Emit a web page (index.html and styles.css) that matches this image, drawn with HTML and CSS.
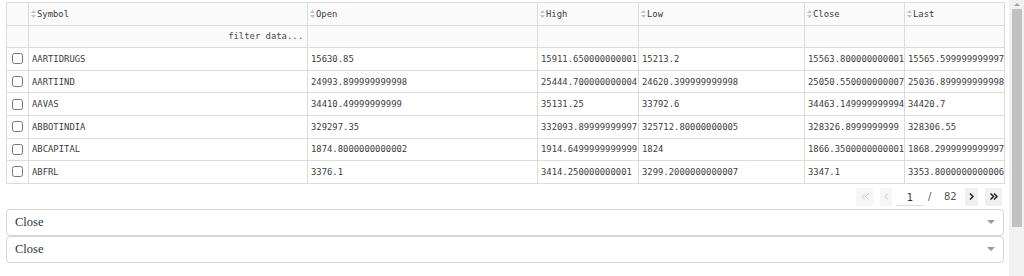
FILE: index.html
```html
<!DOCTYPE html>
<html>
<head>
<meta charset="utf-8">
<link rel="stylesheet" href="styles.css">
</head>
<body>
<div class="page">
  <table class="grid">
    <colgroup>
      <col class="c-sel"><col class="c-sym"><col class="c-open"><col class="c-high"><col class="c-low"><col class="c-close"><col class="c-last">
    </colgroup>
    <thead>
      <tr class="hdr">
        <th></th>
        <th><span class="sort"><svg width="5" height="8" viewBox="0 0 5 8"><path d="M2.5 0L5 3H0Z M2.5 8L0 5H5Z"/></svg></span>Symbol</th>
        <th><span class="sort"><svg width="5" height="8" viewBox="0 0 5 8"><path d="M2.5 0L5 3H0Z M2.5 8L0 5H5Z"/></svg></span>Open</th>
        <th><span class="sort"><svg width="5" height="8" viewBox="0 0 5 8"><path d="M2.5 0L5 3H0Z M2.5 8L0 5H5Z"/></svg></span>High</th>
        <th><span class="sort"><svg width="5" height="8" viewBox="0 0 5 8"><path d="M2.5 0L5 3H0Z M2.5 8L0 5H5Z"/></svg></span>Low</th>
        <th><span class="sort"><svg width="5" height="8" viewBox="0 0 5 8"><path d="M2.5 0L5 3H0Z M2.5 8L0 5H5Z"/></svg></span>Close</th>
        <th><span class="sort"><svg width="5" height="8" viewBox="0 0 5 8"><path d="M2.5 0L5 3H0Z M2.5 8L0 5H5Z"/></svg></span>Last</th>
      </tr>
      <tr class="filter">
        <th></th>
        <th class="filter-ph">filter data...</th>
        <th></th><th></th><th></th><th></th><th></th>
      </tr>
    </thead>
    <tbody>
      <tr><td class="sel"><input type="checkbox"></td><td>AARTIDRUGS</td><td>15630.85</td><td>15911.650000000001</td><td>15213.2</td><td>15563.800000000001</td><td>15565.599999999997</td></tr>
      <tr><td class="sel"><input type="checkbox"></td><td>AARTIIND</td><td>24993.899999999998</td><td>25444.700000000004</td><td>24620.399999999998</td><td>25050.550000000007</td><td>25036.899999999998</td></tr>
      <tr><td class="sel"><input type="checkbox"></td><td>AAVAS</td><td>34410.49999999999</td><td>35131.25</td><td>33792.6</td><td>34463.149999999994</td><td>34420.7</td></tr>
      <tr><td class="sel"><input type="checkbox"></td><td>ABBOTINDIA</td><td>329297.35</td><td>332093.89999999997</td><td>325712.80000000005</td><td>328326.8999999999</td><td>328306.55</td></tr>
      <tr><td class="sel"><input type="checkbox"></td><td>ABCAPITAL</td><td>1874.8000000000002</td><td>1914.6499999999999</td><td>1824</td><td>1866.3500000000001</td><td>1868.2999999999997</td></tr>
      <tr><td class="sel"><input type="checkbox"></td><td>ABFRL</td><td>3376.1</td><td>3414.250000000001</td><td>3299.2000000000007</td><td>3347.1</td><td>3353.8000000000006</td></tr>
    </tbody>
  </table>

  <div class="pager">
    <button class="pg-btn disabled" type="button"><svg width="8" height="7" viewBox="0 0 8 7"><path d="M4 0.5L1 3.5L4 6.5M7.5 0.5L4.5 3.5L7.5 6.5"/></svg></button>
    <button class="pg-btn prev disabled" type="button"><svg width="5" height="7" viewBox="0 0 5 7"><path d="M4 0.5L1 3.5L4 6.5"/></svg></button>
    <span class="pg-input">1</span>
    <span class="pg-sep">/</span>
    <span class="pg-total">82</span>
    <button class="pg-btn next" type="button"><svg width="5" height="7" viewBox="0 0 5 7"><path d="M1 0.5L4 3.5L1 6.5"/></svg></button>
    <button class="pg-btn last" type="button"><svg width="8" height="7" viewBox="0 0 8 7"><path d="M0.5 0.5L3.5 3.5L0.5 6.5M4 0.5L7 3.5L4 6.5"/></svg></button>
  </div>

  <div class="dropdown"><span class="dd-value">Close</span><span class="dd-arrow"></span></div>
  <div class="dropdown"><span class="dd-value">Close</span><span class="dd-arrow"></span></div>
</div>
<div class="scrollbar">
  <span class="sb-up"></span>
  <span class="sb-thumb"></span>
</div>
</body>
</html>
```

FILE: styles.css
```css
html, body {
  margin: 0;
  padding: 0;
  background: #fff;
}

body {
  display: flex;
  height: 276px;
  overflow: hidden;
}

.page {
  width: 998px;
  padding: 2px 5px 0 6px;
  display: flex;
  flex-direction: column;
}

.scrollbar {
  width: 15px;
  background: #f1f1f1;
  display: flex;
  flex-direction: column;
  align-items: flex-start;
}

.sb-up {
  margin: 3px 0 0 5px;
  width: 0;
  height: 0;
  border-left: 3px solid transparent;
  border-right: 3px solid transparent;
  border-bottom: 3px solid #a3a3a3;
}

.sb-thumb {
  margin: 3px 0 0 3px;
  width: 10px;
  height: 218px;
  background: #c1c1c1;
}

.grid {
  border-collapse: collapse;
  table-layout: fixed;
  width: 998px;
  font-family: "DejaVu Sans Mono", "Liberation Mono", monospace;
  font-size: 8.9px;
  color: #3c3c3c;
}

.c-sel { width: 22px; }
.c-sym { width: 279px; }
.c-open { width: 230px; }
.c-high { width: 101px; }
.c-low { width: 166px; }
.c-close { width: 100px; }
.c-last { width: 100px; }

.grid th,
.grid td {
  border: 1px solid #dcdcdc;
  height: 21.6px;
  padding: 0 2px 0 3px;
  text-align: left;
  font-weight: normal;
  white-space: nowrap;
  overflow: hidden;
  vertical-align: middle;
}

.grid thead th {
  background: #fafafa;
}

.grid .hdr th {
  padding-left: 2px;
}

.sort {
  display: inline-block;
  margin-right: 1px;
  vertical-align: -1px;
}

.sort svg {
  display: block;
  fill: #c4c4c4;
}

.grid .filter-ph {
  text-align: right;
  padding-right: 4px;
  color: #4a4a4a;
}

.grid td.sel {
  padding: 0;
  text-align: center;
}

.sel input {
  margin: 0;
  width: 11px;
  height: 11px;
  vertical-align: middle;
}

.pager {
  display: flex;
  justify-content: flex-end;
  align-items: center;
  margin-top: 4px;
  padding-right: 2px;
  height: 18px;
  font-family: "DejaVu Sans", "Open Sans", sans-serif;
  font-size: 10px;
  color: #555;
}

.pg-btn {
  display: flex;
  align-items: center;
  justify-content: center;
  width: 17px;
  height: 18px;
  padding: 0;
  border: none;
  border-radius: 2px;
  background: #f0f0f0;
}

.pg-btn.prev {
  width: 12px;
  margin-left: 7px;
}

.pg-btn.next {
  width: 13px;
}

.pg-btn.last {
  margin-left: 7px;
}

.pg-btn svg {
  fill: none;
  stroke: #222;
  stroke-width: 1.5;
}

.pg-btn.disabled {
  background: #f6f6f6;
}

.pg-btn.disabled svg {
  stroke: #c8c8c8;
  stroke-width: 1;
}

.pg-input {
  width: 28px;
  height: 17px;
  margin-left: 4px;
  border-bottom: 1px solid #ddd;
  text-align: center;
  line-height: 20px;
  color: #333;
}

.pg-sep {
  width: 4px;
  margin-left: 4px;
}

.pg-total {
  width: 10px;
  margin-left: 12px;
  margin-right: 11px;
  color: #555;
}

.dropdown {
  display: flex;
  align-items: center;
  justify-content: space-between;
  box-sizing: border-box;
  width: 998px;
  height: 27px;
  border: 1px solid #d6d6d6;
  border-radius: 4px;
  padding: 0 8px 0 8px;
  font-family: "Liberation Serif", "Times New Roman", serif;
  font-size: 12.5px;
  color: #333;
  background: #fff;
}

.pager + .dropdown {
  margin-top: 3px;
}

.dd-arrow {
  width: 0;
  height: 0;
  border-left: 4px solid transparent;
  border-right: 4px solid transparent;
  border-top: 4px solid #999;
}
```
